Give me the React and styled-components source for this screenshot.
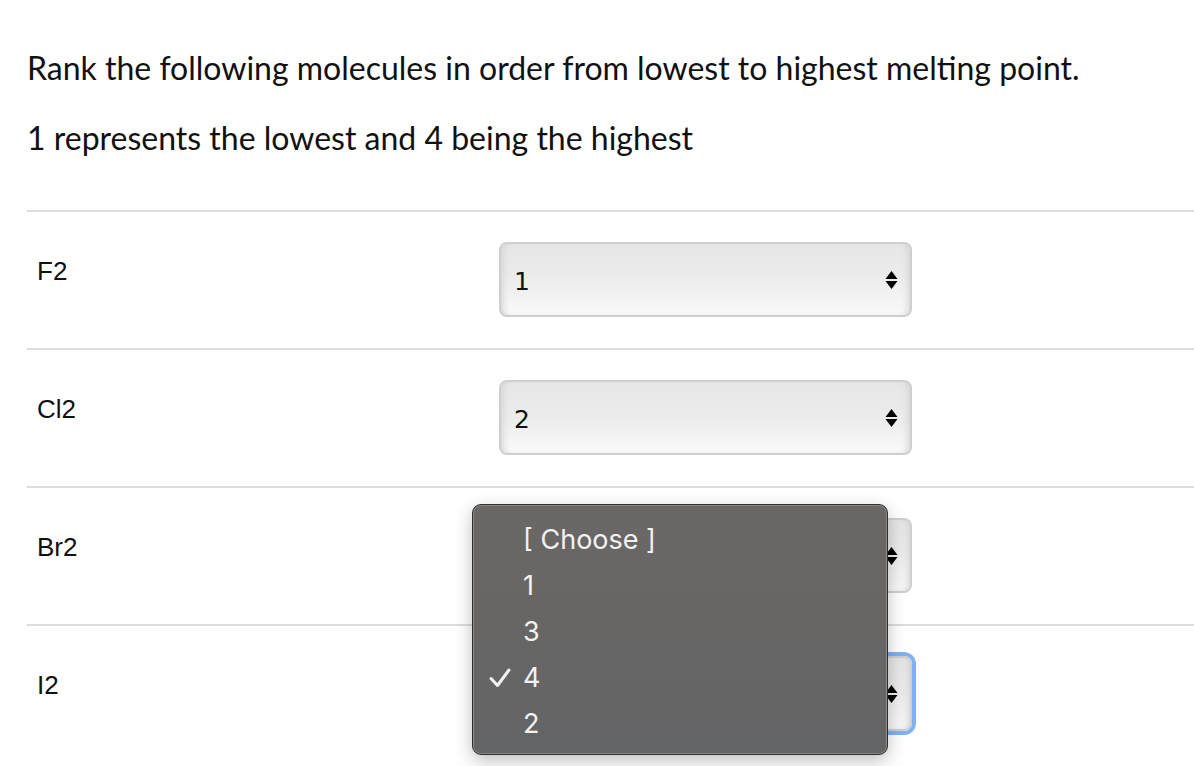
import React from 'react';
import styled, { createGlobalStyle } from 'styled-components';

const GlobalStyle = createGlobalStyle`
  html, body {
    margin: 0;
    padding: 0;
    background: #ffffff;
  }
  body {
    font-family: Lato, "Liberation Sans", sans-serif;
    color: #111;
  }
`;

const Page = styled.div`
  padding: 44px 0 0 27px;
  width: 1194px;
  box-sizing: border-box;
  height: 766px;
  overflow: hidden;
`;

const Prompt = styled.p`
  margin: 0 0 ${(props) => props.gap || 0}px 0;
  font-family: Lato, sans-serif;
  font-size: 32px;
  line-height: 48px;
  color: #111;
`;

const Rows = styled.div`
  margin-top: 48px;
`;

const Row = styled.div`
  display: grid;
  grid-template-columns: 472px 413px;
  border-top: 2px solid #dddddd;
  padding: 30px 0 31px 0;
`;

const Label = styled.div`
  font-family: "Liberation Sans", Arial, sans-serif;
  font-size: 26px;
  line-height: 30px;
  margin-top: 14px;
  padding-left: 10px;
  color: #111;
`;

const SelectWrap = styled.div`
  position: relative;
`;

const Select = styled.div`
  height: 75px;
  box-sizing: border-box;
  border: 2px solid #cfcfcf;
  border-radius: 8px;
  background: linear-gradient(#e6e6e6 0%, #ebebeb 45%, #f9f9f9 100%);
  box-shadow: ${(props) =>
    props.focused
      ? '0 0 0 4px #7fb1f3, inset 6px 0 6px -4px #d4d4d4, inset -6px 0 6px -4px #d4d4d4'
      : 'inset 6px 0 6px -4px #d4d4d4, inset -6px 0 6px -4px #d4d4d4'};
  display: flex;
  align-items: center;
  justify-content: space-between;
  padding: 4px 12px 0 13px;
  font-family: "DejaVu Sans", sans-serif;
  font-size: 25px;
  color: #111;
`;

const Arrows = styled.svg`
  width: 13px;
  height: 20px;
  margin-top: -4px;
`;

const Menu = styled.div`
  position: absolute;
  left: -27px;
  top: -14px;
  width: 416px;
  height: 251px;
  box-sizing: border-box;
  padding: 12px 0 9px 0;
  border: 1px solid #2f2f2f;
  border-radius: 9px;
  background: linear-gradient(#6a6866 0%, #676665 50%, #636466 100%);
  box-shadow: inset 0 0 0 1px #8a8987, 0 6px 18px rgba(0, 0, 0, 0.25);
  z-index: 2;
`;

const Item = styled.div`
  position: relative;
  height: 46px;
  line-height: 46px;
  padding-left: 50px;
  font-family: Inter, Roboto, sans-serif;
  font-size: 27px;
  color: #f2f2f2;
`;

const Check = styled.svg`
  position: absolute;
  left: 16px;
  top: 13px;
  width: 22px;
  height: 20px;
`;

const ArrowIcon = () => (
  <Arrows viewBox="0 0 13 20">
    <path d="M6.5 1 L12.5 9 L0.5 9 Z" fill="#000" />
    <path d="M0.5 11 L12.5 11 L6.5 19 Z" fill="#000" />
  </Arrows>
);

const rows = [
  { label: 'F2', value: '1' },
  { label: 'Cl2', value: '2' },
  { label: 'Br2', value: '3', open: true },
  { label: 'I2', value: '4', focused: true },
];

const options = ['[ Choose ]', '1', '3', '4', '2'];

const App = () => (
  <>
    <GlobalStyle />
    <Page>
      <Prompt gap={22}>
        Rank the following molecules in order from lowest to highest melting point.
      </Prompt>
      <Prompt>1 represents the lowest and 4 being the highest</Prompt>
      <Rows>
        {rows.map((row) => (
          <Row key={row.label}>
            <Label>{row.label}</Label>
            <SelectWrap>
              <Select focused={row.focused}>
                <span>{row.open ? '' : row.value}</span>
                <ArrowIcon />
              </Select>
              {row.open && (
                <Menu>
                  {options.map((opt) => (
                    <Item key={opt}>
                      {opt === '4' && (
                        <Check viewBox="0 0 22 20">
                          <path
                            d="M2 10.5 L8.5 17.5 L20 2"
                            fill="none"
                            stroke="#f2f2f2"
                            strokeWidth="3"
                            strokeLinecap="round"
                            strokeLinejoin="round"
                          />
                        </Check>
                      )}
                      {opt}
                    </Item>
                  ))}
                </Menu>
              )}
            </SelectWrap>
          </Row>
        ))}
      </Rows>
    </Page>
  </>
);

export default App;
